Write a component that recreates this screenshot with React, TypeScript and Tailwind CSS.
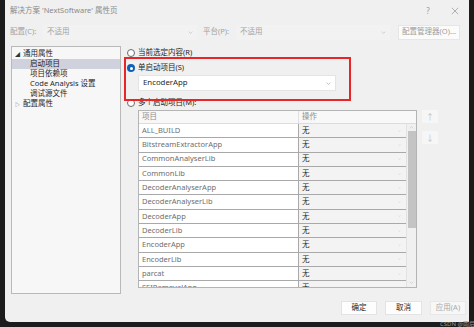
import React from 'react';

const font = { fontFamily: '"Noto Sans", "Noto Sans CJK SC", sans-serif' };

const projects = [
    'ALL_BUILD',
    'BitstreamExtractorApp',
    'CommonAnalyserLib',
    'CommonLib',
    'DecoderAnalyserApp',
    'DecoderAnalyserLib',
    'DecoderApp',
    'DecoderLib',
    'EncoderApp',
    'EncoderLib',
    'parcat',
    'SEIRemovalApp',
];

const Chevron: React.FC<{ className?: string }> = ({ className }) => (
    <svg viewBox="0 0 8 5" className={className} fill="none" stroke="currentColor" strokeWidth="0.9">
        <polyline points="1,1 4,4 7,1" />
    </svg>
);

const Radio: React.FC<{ checked?: boolean }> = ({ checked }) =>
    checked ? (
        <span className="w-[8px] h-[8px] rounded-full bg-[#0f5fb5] flex items-center justify-center shrink-0">
            <span className="w-[3px] h-[3px] rounded-full bg-white" />
        </span>
    ) : (
        <span className="w-[8px] h-[8px] rounded-full border border-[#6b6b6b] bg-white shrink-0" />
    );

const App: React.FC = () => {
    return (
        <div className="w-[474px] h-[327px] bg-[#1c1c1c] overflow-hidden pl-[5px] text-[7.5px] leading-none" style={font}>
            <div className="relative w-[464px] h-[322px] bg-[#f0f0f0] rounded-bl-[5px] flex flex-col">
                {/* title bar */}
                <div className="h-[22px] flex items-center pl-[5px] text-[#8a8a8a]">
                    <span className="flex-1">解决方案 'NextSoftware' 属性页</span>
                    <span className="w-[10px] text-center text-[#9a9a9a] text-[8px]">?</span>
                    <span className="w-[18px]" />
                    <svg viewBox="0 0 10 10" className="w-[8px] h-[8px] mr-[10px] text-[#8a8a8a]" stroke="currentColor" strokeWidth="0.8">
                        <line x1="1" y1="1" x2="9" y2="9" />
                        <line x1="9" y1="1" x2="1" y2="9" />
                    </svg>
                </div>

                {/* config row */}
                <div className="h-[16px] mt-[2px] flex items-center text-[#a3a3a3]">
                    <span className="w-[38px] pl-[5px]">配置(C):</span>
                    <div className="w-[154px] h-[15px] bg-[#f2f2f2] flex items-center px-[4px]">
                        <span className="flex-1">不适用</span>
                        <Chevron className="w-[5px] h-[3px] text-[#b0b0b0]" />
                    </div>
                    <span className="w-[39px] pl-[6px]">平台(P):</span>
                    <div className="w-[154px] h-[15px] bg-[#f2f2f2] flex items-center px-[4px]">
                        <span className="flex-1">不适用</span>
                        <Chevron className="w-[5px] h-[3px] text-[#b0b0b0]" />
                    </div>
                    <div className="ml-[8px] w-[62px] h-[15px] bg-[#fbfbfb] border border-[#e6e6e6] flex items-center justify-center text-[#9c9c9c]">
                        配置管理器(O)...
                    </div>
                </div>

                {/* body */}
                <div className="flex mt-[6px] h-[248px]">
                    {/* tree */}
                    <div className="ml-[6px] w-[110px] h-[248px] border border-[#b9b9b9] bg-[#f7f7f7] pt-[2px] text-[#1f1f1f]">
                        <div className="h-[10px] flex items-center pl-[3px]">
                            <span className="text-[5px] w-[6px] text-[#333]">◢</span>
                            <span className="ml-[2px]">通用属性</span>
                        </div>
                        <div className="h-[10px] flex items-center pl-[18px] bg-[#cfd1dc]">启动项目</div>
                        <div className="h-[10px] flex items-center pl-[18px]">项目依赖项</div>
                        <div className="h-[10px] flex items-center pl-[18px]">Code Analysis 设置</div>
                        <div className="h-[10px] flex items-center pl-[18px]">调试源文件</div>
                        <div className="h-[10px] flex items-center pl-[3px]">
                            <span className="text-[5px] w-[6px] text-[#666]">▷</span>
                            <span className="ml-[2px]">配置属性</span>
                        </div>
                    </div>

                    {/* right side */}
                    <div className="relative ml-[6px] flex-1 text-[#1f1f1f]">
                        <div className="h-[12px] mt-[1px] flex items-center gap-[3px]">
                            <Radio />
                            <span>当前选定内容(R)</span>
                        </div>
                        <div className="h-[14px] mt-[2px] flex items-center gap-[3px]">
                            <Radio checked />
                            <span>单启动项目(S)</span>
                        </div>
                        <div className="ml-[11px] w-[198px] h-[16px] bg-white border border-[#e4e4e4] flex items-center px-[4px]">
                            <span className="flex-1 text-[7.8px]">EncoderApp</span>
                            <Chevron className="w-[5px] h-[3px] text-[#8a8a8a]" />
                        </div>
                        <div className="h-[12px] mt-[6px] flex items-center gap-[3px]">
                            <Radio />
                            <span>多个启动项目(M):</span>
                        </div>

                        {/* highlight box */}
                        <div className="absolute left-[-3px] top-[11px] w-[227px] h-[44px] border-2 border-[#e8262a]" />

                        {/* table + move buttons */}
                        <div className="flex mt-[1px]">
                            <div className="ml-[11px] w-[279px] h-[178px] border border-[#b4b4b4] bg-[#f0f0f0] overflow-hidden flex flex-col">
                                <div className="h-[13px] shrink-0 flex bg-[#f8f8f8] text-[#8e8e8e] border-b border-[#dcdcdc]">
                                    <div className="w-[160px] flex items-center pl-[3px] border-r border-[#e0e0e0]">项目</div>
                                    <div className="flex-1 flex items-center pl-[3px]">操作</div>
                                </div>
                                <div className="flex flex-1 overflow-hidden">
                                    <div className="w-[268px]">
                                        {projects.map((p) => (
                                            <div key={p} className="h-[14.3px] flex border-b-[1.5px] border-[#a9a9a9] text-[#6e6e6e]">
                                                <div className="w-[160px] bg-white flex items-center pl-[3px] border-r-[1.5px] border-[#a9a9a9]">{p}</div>
                                                <div className="flex-1 bg-[#f3f3f3] flex items-center pl-[3px] pr-[5px] text-[#2a2a2a]">
                                                    <span className="flex-1">无</span>
                                                    <Chevron className="w-[3px] h-[2px] text-[#b8b8b8]" />
                                                </div>
                                            </div>
                                        ))}
                                    </div>
                                    <div className="w-[10px] bg-[#f0f0f0] flex flex-col items-center border-l border-[#e2e2e2]">
                                        <Chevron className="w-[5px] h-[3px] mt-[2px] text-[#bdbdbd] rotate-180" />
                                        <div className="w-[8px] h-[97px] mt-[2px] bg-[#c4c4c4]" />
                                        <div className="flex-1" />
                                        <Chevron className="w-[5px] h-[3px] mb-[3px] text-[#bdbdbd]" />
                                    </div>
                                </div>
                            </div>
                            <div className="ml-[5px] flex flex-col gap-[8px]">
                                <div className="w-[16px] h-[13px] bg-[#f6f6f6] flex items-center justify-center text-[#c2c2c2] text-[8px]">↑</div>
                                <div className="w-[16px] h-[13px] bg-[#f6f6f6] flex items-center justify-center text-[#c2c2c2] text-[8px]">↓</div>
                            </div>
                        </div>
                    </div>
                </div>

                {/* footer buttons */}
                <div className="flex justify-end gap-[8px] mt-[7px] pr-[3px]">
                    <div className="w-[36px] h-[14px] bg-[#fdfdfd] border border-[#e3e3e3] flex items-center justify-center text-[#1f1f1f]">确定</div>
                    <div className="w-[37px] h-[14px] bg-[#fdfdfd] border border-[#e3e3e3] flex items-center justify-center text-[#1f1f1f]">取消</div>
                    <div className="w-[36px] h-[14px] bg-[#f7f7f7] border border-[#e8e8e8] flex items-center justify-center text-[#a8a8a8]">应用(A)</div>
                </div>
                <span className="absolute right-[-6px] bottom-[-5px] text-[6px] text-[#9a9a9a]">CSDN @雨后</span>
            </div>
        </div>
    );
};

export default App;
